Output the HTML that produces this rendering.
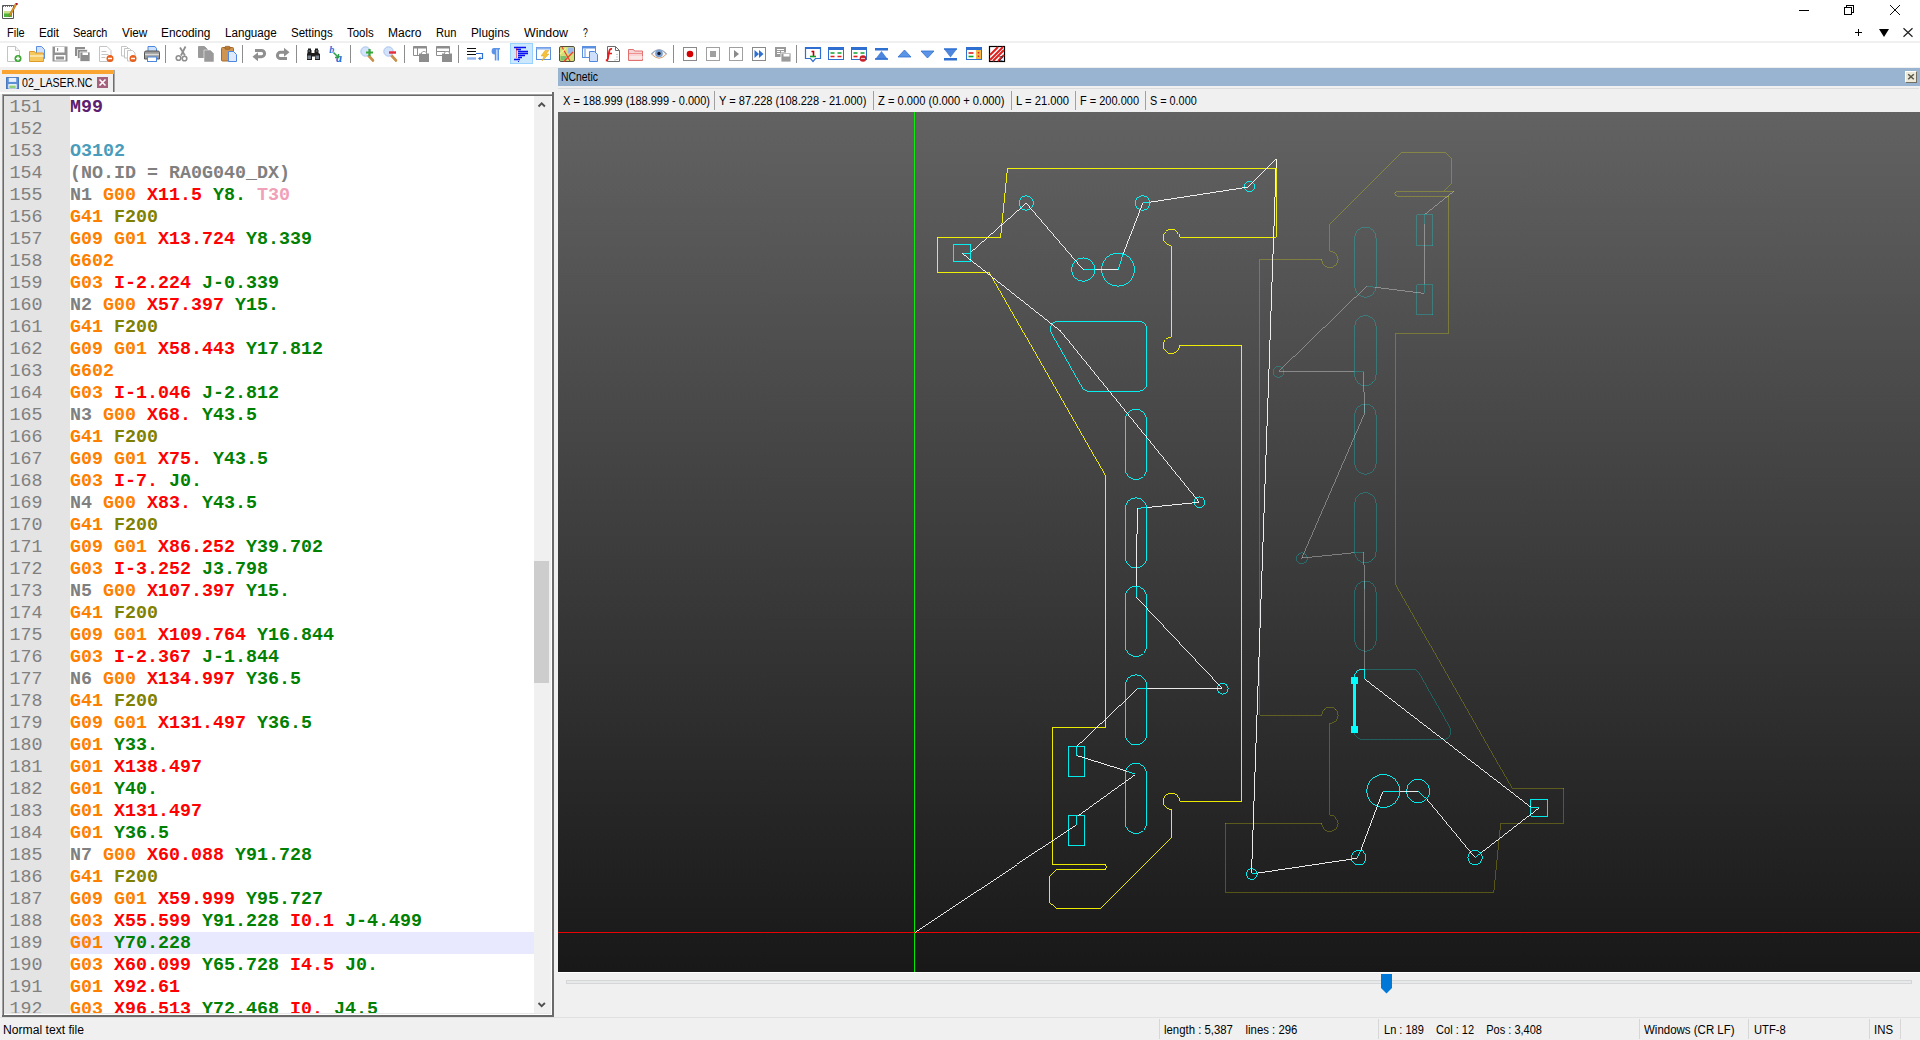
<!DOCTYPE html>
<html><head><meta charset="utf-8"><title>02_LASER.NC - Notepad++</title>
<style>
html,body{margin:0;padding:0;background:#fff;overflow:hidden}
body{width:1920px;height:1040px;position:relative;font-family:"Liberation Sans", sans-serif;font-size:12px;color:#000}
.abs{position:absolute}
.ui{position:absolute;white-space:nowrap;font-size:12px;line-height:16px;height:16px;transform-origin:0 50%;color:#000}
#titlebar{position:absolute;left:0;top:0;width:1920px;height:22px;background:#fff}
#menubar{position:absolute;left:0;top:22px;width:1920px;height:20px;background:#fff}
#tbline{position:absolute;left:0;top:41px;width:1920px;height:2px;background:#f0f0f0}
#toolbar{position:absolute;left:0;top:43px;width:1920px;height:24px;background:#fff}
.tsep{position:absolute;top:45px;width:1px;height:18px;background:#8d8d8d}
.tsel{position:absolute;background:#cce8ff;border:1px solid #99d1ff}
.ic{position:absolute;overflow:visible}
#lower{position:absolute;left:0;top:67px;width:1920px;height:973px;background:#f0f0f0}
#tab{position:absolute;left:2px;top:70px;width:111px;height:24px;background:#f0f0f0;border-right:1px solid #6d6d6d;box-shadow:1px 0 0 #a8a8a8}
#tabbar{position:absolute;left:2px;top:69.5px;width:112px;height:4px;background:#faa432}
#edframe{position:absolute;left:2px;top:94px;width:552px;height:923px;background:#6a6a6a}
#edtopw{position:absolute;left:0px;top:92px;width:552.4px;height:2px;background:#fff}
#edrt{position:absolute;left:552.4px;top:92px;width:1.6px;height:4px;background:#6a6a6a}
#edtl{position:absolute;left:2px;top:94px;width:550.4px;height:921.2px;background:#a0a0a0}
#edtl2{position:absolute;left:3px;top:95px;width:549.4px;height:920.2px;background:#6a6a6a}
#edin{position:absolute;left:4px;top:96px;width:548.4px;height:919.2px;background:#fff}
#edline{position:absolute;left:4px;top:1013px;width:546.5px;height:1px;background:#e8e8e8}
#editor{position:absolute;left:4px;top:96px;width:530px;height:917px;background:#fff;overflow:hidden}
#margin{position:absolute;left:0;top:0;width:66px;height:920px;background:#e4e4e4}
.row{position:absolute;left:0;width:530px;height:22px;line-height:24px;white-space:pre;font-family:"Liberation Mono",monospace;font-size:18.33px;font-weight:bold}
.row.cur .tx{background:#e8e8ff}
.ln{position:absolute;left:5.5px;top:0;color:#808080;font-weight:normal}
.tx{position:absolute;left:66px;top:0;width:464px;height:22px}
.k-m{color:#5c2070} .k-o{color:#4a9cba} .k-cm{color:#808080} .k-n{color:#808080} .k-g{color:#ff8000}
.k-x{color:#ff0000} .k-y{color:#008000} .k-t{color:#f0a0b8} .k-f{color:#808000}
#vscroll{position:absolute;left:534px;top:96px;width:16.5px;height:917px;background:#f0f0f0}
#vthumb{position:absolute;left:534px;top:561px;width:15px;height:122px;background:#cdcdcd}
#pane-title{position:absolute;left:558px;top:68px;width:1362px;height:18px;background:#99b4d1}
#pane-line{position:absolute;left:558px;top:88px;width:1361px;height:1px;background:#dcdcdc}
#pane-close{position:absolute;left:1905px;top:71px;width:10px;height:10px;background:#ece9d8;border-top:1px solid #fff;border-left:1px solid #fff;border-right:1px solid #716f64;border-bottom:1px solid #716f64}
.isep{position:absolute;top:91px;width:1px;height:19px;background:#a0a0a0}
#plot{position:absolute;left:558px;top:112px;width:1362px;height:860px;background:linear-gradient(#626262,#181818);overflow:hidden}
#plot svg{position:absolute;left:0;top:0}
#plot path{fill:none;stroke-width:.9;shape-rendering:crispEdges}
.y{stroke:#ffff00} .c{stroke:#00ffff} .w{stroke:#ffffff}
.dim{stroke-opacity:.27} .w.dim{stroke-opacity:.38}
.cur{stroke:#00ffff;stroke-width:3.5 !important}
#strack{position:absolute;left:566px;top:980px;width:1344px;height:2px;background:#e7eaea;border:1px solid #d6d6d6;box-sizing:content-box}
#sthumb{position:absolute;left:1381px;top:974px}
#plotw{position:absolute;left:558px;top:972px;width:1362px;height:1px;background:#fff}
#statusline{position:absolute;left:0;top:1017px;width:1920px;height:1px;background:#e0e0e0}
.ssep{position:absolute;top:1019px;width:1px;height:20px;background:#d7d7d7}
</style></head>
<body>
<div id="titlebar">
<svg class="abs" style="left:2px;top:3px" width="17" height="18" viewBox="0 0 17 18"><path d="M.5 2.500h11v13h-11z" fill="#fff" stroke="#555"/><path d="M1 3.500h10" stroke="#777" stroke-dasharray="1 1"/><rect x="2" y="8" width="8" height="6" fill="#4fb43a"/><rect x="2" y="8" width="8" height="2.500" fill="#c8e08c"/><path d="M15 1l-6.500 11.500l-1.500 1.500l.3-2.300L13.500.3z" fill="#f0a020" stroke="#a05a10" stroke-width=".6"/><circle cx="14.800" cy=".9" r="1" fill="#b01020"/></svg>
<svg class="abs" style="left:1790px;top:0" width="130" height="22" viewBox="0 0 130 22" shape-rendering="crispEdges">
<path d="M9 10.5h10" stroke="#000" stroke-width="1" fill="none"/>
<path d="M54.5 7.5h7v7h-7z M56.5 7.500v-2h7v7h-2" stroke="#000" stroke-width="1" fill="none"/>
<path d="M100 5l10 10M110 5l-10 10" stroke="#000" stroke-width=".95" fill="none" shape-rendering="geometricPrecision"/>
</svg>
</div>
<div id="menubar"></div>
<span id="t1" class="ui" style="left:7.3px;top:25px;transform:scaleX(0.9150);">File</span>
<span id="t2" class="ui" style="left:39px;top:25px;transform:scaleX(0.9668);">Edit</span>
<span id="t3" class="ui" style="left:73.3px;top:25px;transform:scaleX(0.9045);">Search</span>
<span id="t4" class="ui" style="left:121.7px;top:25px;transform:scaleX(0.9807);">View</span>
<span id="t5" class="ui" style="left:161.3px;top:25px;transform:scaleX(0.9871);">Encoding</span>
<span id="t6" class="ui" style="left:225.3px;top:25px;transform:scaleX(0.9683);">Language</span>
<span id="t7" class="ui" style="left:291px;top:25px;transform:scaleX(0.9617);">Settings</span>
<span id="t8" class="ui" style="left:347px;top:25px;transform:scaleX(0.9530);">Tools</span>
<span id="t9" class="ui" style="left:388.3px;top:25px;transform:scaleX(1.0017);">Macro</span>
<span id="t10" class="ui" style="left:436.3px;top:25px;transform:scaleX(0.9266);">Run</span>
<span id="t11" class="ui" style="left:471.3px;top:25px;transform:scaleX(0.9832);">Plugins</span>
<span id="t12" class="ui" style="left:524px;top:25px;transform:scaleX(1.0307);">Window</span>
<span id="t13" class="ui" style="left:582.7px;top:25px;transform:scaleX(0.7178);">?</span>
<svg class="abs" style="left:1850px;top:24px" width="70" height="16" viewBox="0 0 70 16">
<path d="M4.500 8.500h7M8 5v7" stroke="#000" stroke-width="1" fill="none" shape-rendering="crispEdges"/>
<path d="M29 5h10l-5 8z" fill="#000"/>
<path d="M53.500 4.200l9 8.600M62.500 4.200l-9 8.600" stroke="#222" stroke-width="1.200" fill="none"/>
</svg>
<div id="tbline"></div>
<div id="toolbar"></div>
<div class="tsep" style="left:165px"></div>
<div class="tsep" style="left:242px"></div>
<div class="tsep" style="left:296px"></div>
<div class="tsep" style="left:350px"></div>
<div class="tsep" style="left:404px"></div>
<div class="tsep" style="left:458px"></div>
<div class="tsep" style="left:673px"></div>
<div class="tsep" style="left:796px"></div>
<div class="tsel" style="left:510px;top:43px;width:21px;height:19px"></div>
<svg class="ic" style="left:6px;top:46px" width="16" height="16" viewBox="0 0 16 16"><path d="M1.500 .5h8l4 4v11h-12z" fill="#fff" stroke="#c4c4c4"/><path d="M9.500 .5v4h4" fill="#f4f4f4" stroke="#c4c4c4"/><circle cx="12" cy="12.500" r="3.500" fill="#3fa535"/><path d="M10 12.500h4M12 10.500v4" stroke="#fff" stroke-width="1.400"/></svg>
<svg class="ic" style="left:29px;top:46px" width="16" height="16" viewBox="0 0 16 16"><path d="M7.500 .5h5l3 3v9h-8z" fill="#cfe0fb" stroke="#5b8de0"/><path d="M.5 5.500h5l1 1.500h8v8.500h-14z" fill="#f6c860" stroke="#e09a28"/><path d="M1 10h13.500" stroke="#fbe3a6" stroke-width="2"/></svg>
<svg class="ic" style="left:52px;top:46px" width="16" height="16" viewBox="0 0 16 16"><path d="M.5 .5h15v15h-15z" fill="#929292"/><rect x="3" y="1" width="9.500" height="5.500" fill="#fff"/><rect x="5" y="2" width="1.200" height="3" fill="#929292"/><rect x="2.500" y="9" width="11" height="5.500" fill="#fff"/><rect x="4" y="10.500" width="8" height="3" fill="#929292"/></svg>
<svg class="ic" style="left:75px;top:46px" width="16" height="16" viewBox="0 0 16 16"><path d="M0 1h10v9h-10z" fill="#8d8d8d"/><path d="M2.500 3.500h10v9h-10z" fill="#8d8d8d" stroke="#fff" stroke-width=".7"/><path d="M5 6h10v9.500h-10z" fill="#8d8d8d" stroke="#fff" stroke-width=".7"/><rect x="7.500" y="6.500" width="5.500" height="2.500" fill="#fff"/></svg>
<svg class="ic" style="left:98px;top:46px" width="16" height="16" viewBox="0 0 16 16"><path d="M1.500 .5h7.500l4 4v11h-11.500z" fill="#fff" stroke="#c4c4c4"/><path d="M3.500 5.500h5M3.500 8.500h7M3.500 11.500h4" stroke="#c4c4c4" stroke-width="1"/><circle cx="12" cy="12.500" r="3.500" fill="#e8601c"/><path d="M10 12.500h4" stroke="#fff" stroke-width="1.500"/></svg>
<svg class="ic" style="left:121px;top:46px" width="16" height="16" viewBox="0 0 16 16"><path d="M.5 .5h5l2.500 2.500v7h-7.500z" fill="#fff" stroke="#c4c4c4"/><path d="M3.500 2.500h5l2.500 2.500v7h-7.500z" fill="#fff" stroke="#c4c4c4"/><path d="M6.500 4.500h5l2.500 2.500v8h-7.500z" fill="#fff" stroke="#c4c4c4"/><circle cx="12" cy="12.500" r="3.500" fill="#e8601c"/><path d="M10 12.500h4" stroke="#fff" stroke-width="1.500"/></svg>
<svg class="ic" style="left:144px;top:46px" width="16" height="16" viewBox="0 0 16 16"><path d="M4 .5h7l1.500 2v4h-8.500z" fill="#cfe0fb" stroke="#4e86e0"/><path d="M.5 6.500q0-1.500 1.500-1.500h12q1.500 0 1.500 1.500v6.500h-15z" fill="#9a9a9a" stroke="#555"/><path d="M1 8.500h14" stroke="#d8d8d8" stroke-width="1.500"/><rect x="3.500" y="11" width="9" height="4.500" fill="#fff" stroke="#4e86e0"/></svg>
<svg class="ic" style="left:175px;top:46px" width="16" height="16" viewBox="0 0 16 16"><path d="M10.500 .5L6 9.500M5 1.500l5 8" stroke="#8f8f8f" stroke-width="1.800" fill="none"/><circle cx="3.500" cy="12" r="2.300" fill="none" stroke="#8f8f8f" stroke-width="1.600"/><circle cx="9.500" cy="12.500" r="2.300" fill="none" stroke="#8f8f8f" stroke-width="1.600"/></svg>
<svg class="ic" style="left:198px;top:46px" width="16" height="16" viewBox="0 0 16 16"><path d="M.5 .5h6l3 3v8h-9z" fill="#9a9a9a" stroke="#fff" stroke-width=".6"/><path d="M.5 .5h6l3 3v8h-9z" fill="none" stroke="#9a9a9a"/><path d="M6.500 4.500h6l3 3v8h-9z" fill="#9a9a9a" stroke="#fff" stroke-width="1.600"/><path d="M6.500 4.500h6l3 3v8h-9z" fill="#9a9a9a" stroke="#9a9a9a" stroke-width=".5"/></svg>
<svg class="ic" style="left:221px;top:46px" width="16" height="16" viewBox="0 0 16 16"><rect x=".5" y="1.500" width="12" height="13.500" rx="1" fill="#cf9550" stroke="#a86a28"/><rect x="4" y=".3" width="5" height="3" rx=".8" fill="#b97a34" stroke="#8a5520" stroke-width=".6"/><path d="M7.500 5.500h5l3 3v7h-8z" fill="#dfeafc" stroke="#4e86e0"/></svg>
<svg class="ic" style="left:252px;top:46px" width="16" height="16" viewBox="0 0 16 16"><path d="M3 4.500h6.500a3.100 3.100 0 0 1 0 6.200h-4" stroke="#8f8f8f" stroke-width="3" fill="none"/><path d="M6 6.200v9l-5.500-4.500z" fill="#8f8f8f"/></svg>
<svg class="ic" style="left:275px;top:46px" width="16" height="16" viewBox="0 0 16 16"><g transform="rotate(180 7.500 8.500)"><path d="M3 4.500h6.500a3.100 3.100 0 0 1 0 6.200h-4" stroke="#8f8f8f" stroke-width="3" fill="none"/><path d="M6 6.200v9l-5.500-4.500z" fill="#8f8f8f"/></g></svg>
<svg class="ic" style="left:306px;top:46px" width="16" height="16" viewBox="0 0 16 16"><path d="M1.500 4h4v3h3v-3h4v3l1.500 1v6h-5v-3.500h-3v3.500h-5v-6l.5-1z" fill="#1d1d1d"/><path d="M2 2.500h3v2h-3zM9 2.500h3v2h-3z" fill="#1d1d1d"/><path d="M1.500 9.500h3.500v3.500h-3.500zM9.500 9.500h3.500v3.500h-3.500z" fill="#77828e"/><path d="M2.500 5h1.500M10 5h1.500" stroke="#8c98a6"/></svg>
<svg class="ic" style="left:329px;top:46px" width="16" height="16" viewBox="0 0 16 16"><text x=".2" y="7" font-family="Liberation Serif,serif" font-style="italic" font-weight="bold" font-size="10" fill="#2a6fd6">b</text><text x="7" y="15.500" font-family="Liberation Serif,serif" font-style="italic" font-weight="bold" font-size="12" fill="#2a6fd6">a</text><path d="M4.500 6.500l4.500 4.500M9.500 8v3.500h-3.500" stroke="#2e9e4a" stroke-width="1.500" fill="none"/></svg>
<svg class="ic" style="left:360px;top:46px" width="16" height="16" viewBox="0 0 16 16"><path d="M7.500 8.500l5.500 6" stroke="#c8904a" stroke-width="2.600" stroke-linecap="round"/><circle cx="5.500" cy="5.500" r="4.700" fill="#d2e3fb" stroke="#a9c4ee"/><path d="M6 6.500h7M9.500 3v7" stroke="#3aa53a" stroke-width="2.200"/></svg>
<svg class="ic" style="left:383px;top:46px" width="16" height="16" viewBox="0 0 16 16"><path d="M7.500 8.500l5.500 6" stroke="#c8904a" stroke-width="2.600" stroke-linecap="round"/><circle cx="5.500" cy="5.500" r="4.700" fill="#d2e3fb" stroke="#a9c4ee"/><path d="M6 6.500h7" stroke="#e82a3a" stroke-width="2.400"/></svg>
<svg class="ic" style="left:413px;top:46px" width="16" height="16" viewBox="0 0 16 16"><path d="M.5 .5h13v9h-13z" fill="#fff" stroke="#8d8d8d"/><path d="M.5 .5h13v2h-13z" fill="#8d8d8d"/><path d="M4.500 2v7.500" stroke="#8d8d8d"/><rect x="6" y="7.500" width="10" height="8.500" fill="#8d8d8d"/><path d="M8.500 8v-1.500q2.500-2.500 5 0v1.500" fill="#fff" stroke="#8d8d8d" stroke-width=".8"/></svg>
<svg class="ic" style="left:436px;top:46px" width="16" height="16" viewBox="0 0 16 16"><path d="M.5 .5h13v9h-13z" fill="#fff" stroke="#8d8d8d"/><path d="M.5 .5h13v2h-13z" fill="#8d8d8d"/><path d="M.5 5.500h13" stroke="#8d8d8d"/><rect x="6" y="7.500" width="10" height="8.500" fill="#8d8d8d"/><path d="M8.500 8v-1.500q2.500-2.500 5 0v1.500" fill="#fff" stroke="#8d8d8d" stroke-width=".8"/></svg>
<svg class="ic" style="left:467px;top:46px" width="16" height="16" viewBox="0 0 16 16"><path d="M0 2.500h9M0 5.500h9M0 8.500h9" stroke="#111" stroke-width="1"/><path d="M0 12.500h9" stroke="#8fb4ee" stroke-width="2.400"/><path d="M9 7.500h6.500v5h-3" stroke="#2e6fd0" stroke-width="1.200" fill="none"/><path d="M13.500 10.500l-2.500 2l2.500 2z" fill="#2e6fd0"/></svg>
<svg class="ic" style="left:490px;top:46px" width="16" height="16" viewBox="0 0 16 16"><path d="M4 2h6v1.500h-1v11h-1.600v-11h-1v11h-1.600v-6q-3.200 0-3.200-3.200t2.400-3.300z" fill="#5b94e6"/></svg>
<svg class="ic" style="left:513px;top:46px" width="16" height="16" viewBox="0 0 16 16"><path d="M0 1.500h12M2 3.500h5M4 5.500h10M4 7.500h10M4 9.500h7M4 11.500h4M0 13.500h6" stroke="#0a10ee" stroke-width="1.500" transform="translate(1 0)"/><path d="M3.500 2.500v10" stroke="#ee1111" stroke-width="1" stroke-dasharray="1 1"/><rect x="5" y="15" width="1" height="1" fill="#0a10ee"/></svg>
<svg class="ic" style="left:536px;top:46px" width="16" height="16" viewBox="0 0 16 16"><rect x=".5" y="1.500" width="14" height="12" fill="#fff" stroke="#5b8fe0"/><rect x=".5" y="1.500" width="14" height="2" fill="#8fb4ee"/><path d="M9 4.500h4l-3 3.500h3l-7 7l2-5h-3z" fill="#f3c23a" stroke="#e0a020" stroke-width=".5"/></svg>
<svg class="ic" style="left:559px;top:46px" width="16" height="16" viewBox="0 0 16 16"><rect x=".5" y=".5" width="15" height="15" rx="1.500" fill="#d3e07a" stroke="#55503a"/><rect x="9" y="1.500" width="5.500" height="6" fill="#9db8e6"/><rect x="1.500" y="10" width="6" height="4.500" fill="#7fc070"/><path d="M3 1l8 14M14 6l-9 9.500" stroke="#ee4030" stroke-width="1.200"/><path d="M1 8l6-6" stroke="#f6f08a" stroke-width="1.200"/></svg>
<svg class="ic" style="left:582px;top:46px" width="16" height="16" viewBox="0 0 16 16"><rect x=".5" y=".5" width="13" height="11" fill="#fff" stroke="#5b8fe0"/><rect x=".5" y=".5" width="13" height="2" fill="#5b8fe0"/><path d="M3 3v8" stroke="#5b8fe0"/><path d="M7.500 5.500h5l3 3v7h-8z" fill="#cddffa" stroke="#4e86e0"/></svg>
<svg class="ic" style="left:605px;top:46px" width="16" height="16" viewBox="0 0 16 16"><path d="M2.500 .5h8l4 4v11h-12z" fill="#fff" stroke="#6d6d6d"/><path d="M10.500 .5v4h4" fill="none" stroke="#6d6d6d"/><path d="M12 8v6h-4" stroke="#9a9a9a" stroke-dasharray="1 1.500" fill="none"/><path d="M7 3q-2.200-.5-2.700 2l-1.500 8q-.3 1.500-2 1.500" stroke="#e02020" stroke-width="1.800" fill="none"/><path d="M2 7.500h5" stroke="#e02020" stroke-width="1.500"/></svg>
<svg class="ic" style="left:628px;top:46px" width="16" height="16" viewBox="0 0 16 16"><path d="M.5 3.500h5l1 1.500h8v9.500h-14z" fill="#f9d4d4" stroke="#e07070"/><path d="M1 7.500h13.500" stroke="#ee9090" stroke-width="1"/><path d="M1 11.500h13.500" stroke="#fbe6e6" stroke-width="3"/></svg>
<svg class="ic" style="left:651px;top:46px" width="16" height="16" viewBox="0 0 16 16"><path d="M.5 8q7.500-8.500 15 0q-7.500 8.500-15 0z" fill="#f4f4f4" stroke="#d9a070" stroke-width="1"/><path d="M.5 8q7.500-8.500 15 0" fill="none" stroke="#9ab0d0" stroke-width="1.200"/><circle cx="8" cy="7.500" r="3.800" fill="#7a9fd0"/><circle cx="8" cy="7.500" r="1.700" fill="#1a1a2a"/></svg>
<svg class="ic" style="left:683px;top:46px" width="16" height="16" viewBox="0 0 16 16"><rect x=".5" y="1.500" width="13" height="13" fill="#fff" stroke="#8a8a8a"/><circle cx="7" cy="8" r="3.300" fill="#d40000"/></svg>
<svg class="ic" style="left:706px;top:46px" width="16" height="16" viewBox="0 0 16 16"><rect x=".5" y="1.500" width="13" height="13" fill="#fff" stroke="#a0a0a0"/><rect x="4" y="5" width="6" height="6" fill="#a0a0a0"/></svg>
<svg class="ic" style="left:729px;top:46px" width="16" height="16" viewBox="0 0 16 16"><rect x=".5" y="1.500" width="13" height="13" fill="#fff" stroke="#a0a0a0"/><path d="M5 4l5 4l-5 4z" fill="#8a8a8a"/></svg>
<svg class="ic" style="left:752px;top:46px" width="16" height="16" viewBox="0 0 16 16"><rect x=".5" y="1.500" width="13" height="13" fill="#fff" stroke="#8a8a8a"/><path d="M2.500 4l4.500 4l-4.500 4zM7 4l4.500 4l-4.500 4z" fill="#2e6fd0"/></svg>
<svg class="ic" style="left:775px;top:46px" width="16" height="16" viewBox="0 0 16 16"><path d="M0 1h11v10h-11z" fill="#9a9a9a"/><path d="M2 3.500h7M2 5.500h3M6 5.500h3M2 7.500h3" stroke="#fff" stroke-width="1"/><path d="M6 7h10v9h-10z" fill="#9a9a9a" stroke="#fff" stroke-width=".8"/><rect x="8.500" y="8" width="6" height="2.500" fill="#fff"/></svg>
<svg class="ic" style="left:805px;top:46px" width="16" height="16" viewBox="0 0 16 16"><path d="M.5 1.500h15v11h-5l-2.500 3l-2.500-3h-5z" fill="#fff" stroke="#2e6fd0" stroke-width="1.200"/><path d="M.5 1.500h15v1.500h-15z" fill="#2e6fd0"/><path d="M6.500 5.500h2v4.500" stroke="#c00000" stroke-width="1.600" fill="none"/><path d="M5 10.500h6" stroke="#10a030" stroke-width="1.600"/></svg>
<svg class="ic" style="left:828px;top:46px" width="16" height="16" viewBox="0 0 16 16"><rect x=".5" y="1.500" width="15" height="12" fill="#fff" stroke="#2e6fd0" stroke-width="1"/><rect x=".5" y="1.500" width="15" height="2.500" fill="#2e6fd0"/><path d="M2.500 7h4M9.500 7h4" stroke="#10a030" stroke-width="1.600"/><path d="M2.500 10.500h4M9.500 10.500h4" stroke="#e02020" stroke-width="1.600"/></svg>
<svg class="ic" style="left:851px;top:46px" width="16" height="16" viewBox="0 0 16 16"><rect x=".5" y="1.500" width="15" height="12" fill="#fff" stroke="#2e6fd0" stroke-width="1"/><rect x=".5" y="1.500" width="15" height="2.500" fill="#2e6fd0"/><path d="M2.500 7h4M9.500 7h4" stroke="#10a030" stroke-width="1.600"/><path d="M2.500 10.500h4" stroke="#e02020" stroke-width="1.600"/><circle cx="12" cy="12.500" r="3.300" fill="#c81e28"/><path d="M10 12.500h4" stroke="#f6c0c0" stroke-width="1.200"/></svg>
<svg class="ic" style="left:874px;top:46px" width="16" height="16" viewBox="0 0 16 16"><path d="M1 2h13v2.500h-13z" fill="#2e6fd0"/><path d="M7.500 5l6.500 8.500h-13z" fill="#4d86dc"/><path d="M1 13h13" stroke="#2e6fd0" stroke-width="1.500"/></svg>
<svg class="ic" style="left:897px;top:46px" width="16" height="16" viewBox="0 0 16 16"><path d="M7.500 4l6.500 7h-13z" fill="#5b94e6" stroke="#2e6fd0" stroke-width=".8"/></svg>
<svg class="ic" style="left:920px;top:46px" width="16" height="16" viewBox="0 0 16 16"><path d="M7.500 12l6.500-7h-13z" fill="#5b94e6" stroke="#2e6fd0" stroke-width=".8"/></svg>
<svg class="ic" style="left:943px;top:46px" width="16" height="16" viewBox="0 0 16 16"><path d="M1 12h13v2.500h-13z" fill="#2e6fd0"/><path d="M7.500 11.500l6.500-8.500h-13z" fill="#4d86dc"/><path d="M1 3h13" stroke="#2e6fd0" stroke-width="1.500"/></svg>
<svg class="ic" style="left:966px;top:46px" width="16" height="16" viewBox="0 0 16 16"><rect x=".5" y="1.500" width="15" height="12" fill="#fff" stroke="#2e6fd0" stroke-width="1"/><rect x=".5" y="1.500" width="15" height="2.500" fill="#2e6fd0"/><path d="M2.500 7h5" stroke="#e02020" stroke-width="1.600"/><path d="M2.500 10.500h5" stroke="#10a030" stroke-width="1.600"/><rect x="10" y="4" width="5" height="9" fill="#f3b84a"/><path d="M12.500 6v1.500M12.500 9.500v1.500" stroke="#e02020" stroke-width="1.500"/></svg>
<svg class="ic" style="left:989px;top:46px" width="16" height="16" viewBox="0 0 16 16"><rect x=".5" y=".5" width="15" height="15" fill="#fff" stroke="#000" stroke-width="1.200"/><path d="M1 9l8-8M1 14l13-13M4 15l11-11M9 15l6-6" stroke="#e02020" stroke-width="2"/><text x="9.500" y="15" font-family="Liberation Sans,sans-serif" font-size="8" fill="#222">2</text></svg>
<div id="lower"></div>
<div id="tab"></div>
<div id="tabbar"></div>
<svg class="abs" style="left:6px;top:76.5px" width="13" height="12.5" viewBox="0 0 14 14" preserveAspectRatio="none"><path d="M.5 .5h13v13h-13z" fill="#5b8fd6" stroke="#3d6fb8"/><rect x="3" y="1" width="8" height="4.500" fill="#e8f0fb"/><rect x="2.500" y="8" width="9" height="5" fill="#fff"/><rect x="3.500" y="9.500" width="7" height="3" fill="#8fcf7a"/></svg>
<span id="t26" class="ui" style="left:22px;top:74.5px;transform:scaleX(0.8807);">02_LASER.NC</span>
<svg class="abs" style="left:97px;top:77px" width="11" height="11" viewBox="0 0 11 11"><rect width="11" height="11" fill="#a4607c"/><path d="M2.500 2.500l6 6M8.500 2.500l-6 6" stroke="#fff" stroke-width="1.6"/></svg>
<div id="edframe"></div><div id="edtopw"></div><div id="edrt"></div><div id="edtl"></div><div id="edtl2"></div><div id="edin"></div><div id="edline"></div>
<div id="editor"><div id="margin"></div>
<div class="row" style="top:0px"><span class="ln">151</span><span class="tx"><span class="k-m">M99</span></span></div>
<div class="row" style="top:22px"><span class="ln">152</span><span class="tx"></span></div>
<div class="row" style="top:44px"><span class="ln">153</span><span class="tx"><span class="k-o">O3102</span></span></div>
<div class="row" style="top:66px"><span class="ln">154</span><span class="tx"><span class="k-cm">(NO.ID = RA0G040_DX)</span></span></div>
<div class="row" style="top:88px"><span class="ln">155</span><span class="tx"><span class="k-n">N1</span> <span class="k-g">G00</span> <span class="k-x">X11.5</span> <span class="k-y">Y8.</span> <span class="k-t">T30</span></span></div>
<div class="row" style="top:110px"><span class="ln">156</span><span class="tx"><span class="k-g">G41</span> <span class="k-f">F200</span></span></div>
<div class="row" style="top:132px"><span class="ln">157</span><span class="tx"><span class="k-g">G09</span> <span class="k-g">G01</span> <span class="k-x">X13.724</span> <span class="k-y">Y8.339</span></span></div>
<div class="row" style="top:154px"><span class="ln">158</span><span class="tx"><span class="k-g">G602</span></span></div>
<div class="row" style="top:176px"><span class="ln">159</span><span class="tx"><span class="k-g">G03</span> <span class="k-x">I-2.224</span> <span class="k-y">J-0.339</span></span></div>
<div class="row" style="top:198px"><span class="ln">160</span><span class="tx"><span class="k-n">N2</span> <span class="k-g">G00</span> <span class="k-x">X57.397</span> <span class="k-y">Y15.</span></span></div>
<div class="row" style="top:220px"><span class="ln">161</span><span class="tx"><span class="k-g">G41</span> <span class="k-f">F200</span></span></div>
<div class="row" style="top:242px"><span class="ln">162</span><span class="tx"><span class="k-g">G09</span> <span class="k-g">G01</span> <span class="k-x">X58.443</span> <span class="k-y">Y17.812</span></span></div>
<div class="row" style="top:264px"><span class="ln">163</span><span class="tx"><span class="k-g">G602</span></span></div>
<div class="row" style="top:286px"><span class="ln">164</span><span class="tx"><span class="k-g">G03</span> <span class="k-x">I-1.046</span> <span class="k-y">J-2.812</span></span></div>
<div class="row" style="top:308px"><span class="ln">165</span><span class="tx"><span class="k-n">N3</span> <span class="k-g">G00</span> <span class="k-x">X68.</span> <span class="k-y">Y43.5</span></span></div>
<div class="row" style="top:330px"><span class="ln">166</span><span class="tx"><span class="k-g">G41</span> <span class="k-f">F200</span></span></div>
<div class="row" style="top:352px"><span class="ln">167</span><span class="tx"><span class="k-g">G09</span> <span class="k-g">G01</span> <span class="k-x">X75.</span> <span class="k-y">Y43.5</span></span></div>
<div class="row" style="top:374px"><span class="ln">168</span><span class="tx"><span class="k-g">G03</span> <span class="k-x">I-7.</span> <span class="k-y">J0.</span></span></div>
<div class="row" style="top:396px"><span class="ln">169</span><span class="tx"><span class="k-n">N4</span> <span class="k-g">G00</span> <span class="k-x">X83.</span> <span class="k-y">Y43.5</span></span></div>
<div class="row" style="top:418px"><span class="ln">170</span><span class="tx"><span class="k-g">G41</span> <span class="k-f">F200</span></span></div>
<div class="row" style="top:440px"><span class="ln">171</span><span class="tx"><span class="k-g">G09</span> <span class="k-g">G01</span> <span class="k-x">X86.252</span> <span class="k-y">Y39.702</span></span></div>
<div class="row" style="top:462px"><span class="ln">172</span><span class="tx"><span class="k-g">G03</span> <span class="k-x">I-3.252</span> <span class="k-y">J3.798</span></span></div>
<div class="row" style="top:484px"><span class="ln">173</span><span class="tx"><span class="k-n">N5</span> <span class="k-g">G00</span> <span class="k-x">X107.397</span> <span class="k-y">Y15.</span></span></div>
<div class="row" style="top:506px"><span class="ln">174</span><span class="tx"><span class="k-g">G41</span> <span class="k-f">F200</span></span></div>
<div class="row" style="top:528px"><span class="ln">175</span><span class="tx"><span class="k-g">G09</span> <span class="k-g">G01</span> <span class="k-x">X109.764</span> <span class="k-y">Y16.844</span></span></div>
<div class="row" style="top:550px"><span class="ln">176</span><span class="tx"><span class="k-g">G03</span> <span class="k-x">I-2.367</span> <span class="k-y">J-1.844</span></span></div>
<div class="row" style="top:572px"><span class="ln">177</span><span class="tx"><span class="k-n">N6</span> <span class="k-g">G00</span> <span class="k-x">X134.997</span> <span class="k-y">Y36.5</span></span></div>
<div class="row" style="top:594px"><span class="ln">178</span><span class="tx"><span class="k-g">G41</span> <span class="k-f">F200</span></span></div>
<div class="row" style="top:616px"><span class="ln">179</span><span class="tx"><span class="k-g">G09</span> <span class="k-g">G01</span> <span class="k-x">X131.497</span> <span class="k-y">Y36.5</span></span></div>
<div class="row" style="top:638px"><span class="ln">180</span><span class="tx"><span class="k-g">G01</span> <span class="k-y">Y33.</span></span></div>
<div class="row" style="top:660px"><span class="ln">181</span><span class="tx"><span class="k-g">G01</span> <span class="k-x">X138.497</span></span></div>
<div class="row" style="top:682px"><span class="ln">182</span><span class="tx"><span class="k-g">G01</span> <span class="k-y">Y40.</span></span></div>
<div class="row" style="top:704px"><span class="ln">183</span><span class="tx"><span class="k-g">G01</span> <span class="k-x">X131.497</span></span></div>
<div class="row" style="top:726px"><span class="ln">184</span><span class="tx"><span class="k-g">G01</span> <span class="k-y">Y36.5</span></span></div>
<div class="row" style="top:748px"><span class="ln">185</span><span class="tx"><span class="k-n">N7</span> <span class="k-g">G00</span> <span class="k-x">X60.088</span> <span class="k-y">Y91.728</span></span></div>
<div class="row" style="top:770px"><span class="ln">186</span><span class="tx"><span class="k-g">G41</span> <span class="k-f">F200</span></span></div>
<div class="row" style="top:792px"><span class="ln">187</span><span class="tx"><span class="k-g">G09</span> <span class="k-g">G01</span> <span class="k-x">X59.999</span> <span class="k-y">Y95.727</span></span></div>
<div class="row" style="top:814px"><span class="ln">188</span><span class="tx"><span class="k-g">G03</span> <span class="k-x">X55.599</span> <span class="k-y">Y91.228</span> <span class="k-x">I0.1</span> <span class="k-y">J-4.499</span></span></div>
<div class="row cur" style="top:836px"><span class="ln">189</span><span class="tx"><span class="k-g">G01</span> <span class="k-y">Y70.228</span></span></div>
<div class="row" style="top:858px"><span class="ln">190</span><span class="tx"><span class="k-g">G03</span> <span class="k-x">X60.099</span> <span class="k-y">Y65.728</span> <span class="k-x">I4.5</span> <span class="k-y">J0.</span></span></div>
<div class="row" style="top:880px"><span class="ln">191</span><span class="tx"><span class="k-g">G01</span> <span class="k-x">X92.61</span></span></div>
<div class="row" style="top:902px"><span class="ln">192</span><span class="tx"><span class="k-g">G03</span> <span class="k-x">X96.513</span> <span class="k-y">Y72.468</span> <span class="k-x">I0.</span> <span class="k-y">J4.5</span></span></div>
</div>
<div id="vscroll"></div><div id="vthumb"></div>
<svg class="abs" style="left:534px;top:96px" width="17" height="920" viewBox="0 0 17 920"><path d="M4.500 10.500l3.200-3.200l3.200 3.200M4.500 907l3.200 3.200l3.200-3.200" stroke="#505050" stroke-width="1.9" fill="none"/></svg>
<div id="pane-title"></div><span id="t27" class="ui" style="left:560.5px;top:69px;transform:scaleX(0.8668);">NCnetic</span>
<div id="pane-close"></div>
<svg class="abs" style="left:1905px;top:71px" width="12" height="12" viewBox="0 0 12 12"><path d="M3.200 3.300l5.600 4.900M8.800 3.300l-5.600 4.900" stroke="#55534a" stroke-width="1.500"/></svg>
<div id="pane-line"></div>
<span id="t14" class="ui" style="left:563px;top:92.5px;transform:scaleX(0.9162);">X = 188.999 (188.999 - 0.000)</span>
<span id="t15" class="ui" style="left:719.3px;top:92.5px;transform:scaleX(0.9198);">Y = 87.228 (108.228 - 21.000)</span>
<span id="t16" class="ui" style="left:878px;top:92.5px;transform:scaleX(0.9294);">Z = 0.000 (0.000 + 0.000)</span>
<span id="t17" class="ui" style="left:1016px;top:92.5px;transform:scaleX(0.9362);">L = 21.000</span>
<span id="t18" class="ui" style="left:1080px;top:92.5px;transform:scaleX(0.9163);">F = 200.000</span>
<span id="t19" class="ui" style="left:1150.3px;top:92.5px;transform:scaleX(0.9030);">S = 0.000</span><div class="isep" style="left:714px"></div><div class="isep" style="left:873px"></div><div class="isep" style="left:1011px"></div><div class="isep" style="left:1075px"></div><div class="isep" style="left:1145px"></div>
<div id="plot"><svg width="1362" height="860" viewBox="0 0 1362 860">
<path d="M356.500 0V860" style="stroke:#00ff00"/>
<path d="M0 820.500H1362" style="stroke:#ff0000"/>
<path class="y" d="M718.3 56.4 L449.5 56.4 L442.6 125.3 L379.4 125.3 L379.4 160.3 L431.1 160.3 L547.5 363.6 L547.5 615.3 L494.5 615.3 L494.5 752.6 L546.5 752.6 A2.4 2.4 0 0 1 546.5 757.3 L499.1 757.3 L491.4 765 L491.4 790.1 L498.4 796.6 L541.7 796.6 L613.4 724.5 L613.4 697.4 A8.2 8.2 0 1 1 621.6 689.2 L683.7 689.2 L683.7 233.4 L621.6 233.4 A8.2 8.2 0 1 1 613.4 225.2 L613.4 133.5 A8.2 8.2 0 1 1 621.6 125.3 L718.3 125.3 Z M718.3 46.5 L718.3 56.4"/>
<path class="c" d="M395.5 132.4 L412.5 132.4 L412.5 149.5 L395.5 149.5 Z M404.3 141.4 L412.5 141.4 M475.4 91 A7.2 7.2 0 1 1 461 91 A7.2 7.2 0 1 1 475.4 91 Z M536.9 157.6 A11.7 11.7 0 1 1 513.5 157.6 A11.7 11.7 0 1 1 536.9 157.6 Z M525.2 157.6 L537 157.6 M576.5 157.6 A16.5 16.5 0 1 1 543.5 157.6 A16.5 16.5 0 1 1 576.5 157.6 Z M560 157.6 L565.3 141.6 M591.9 91 A7.3 7.3 0 1 1 577.3 91 A7.3 7.3 0 1 1 591.9 91 Z M584.6 91 L592 90.2 M696.9 74.5 A5.4 5.4 0 1 1 686.1 74.5 A5.4 5.4 0 1 1 696.9 74.5 Z M500.3 209.1 L580.7 209.1 A8 8 0 0 1 588.7 217.1 L588.7 271.3 A8 8 0 0 1 580.7 279.3 L530.9 279.3 A8 8 0 0 1 524 275.2 L493.3 221 A8 8 0 0 1 500.3 209.1 Z M567.3 307.9 A10.6 10.6 0 0 1 588.6 307.9 L588.6 356.9 A10.6 10.6 0 0 1 567.3 356.9 Z M567.3 396.4 A10.6 10.6 0 0 1 588.6 396.4 L588.6 445.4 A10.6 10.6 0 0 1 567.3 445.4 Z M567.3 484.9 A10.6 10.6 0 0 1 588.6 484.9 L588.6 533.9 A10.6 10.6 0 0 1 567.3 533.9 Z M567.3 573.4 A10.6 10.6 0 0 1 588.6 573.4 L588.6 622.4 A10.6 10.6 0 0 1 567.3 622.4 Z M567.3 661.9 A10.6 10.6 0 0 1 588.6 661.9 L588.6 710.9 A10.6 10.6 0 0 1 567.3 710.9 Z M646.8 390.3 A5.4 5.4 0 1 1 636 390.3 A5.4 5.4 0 1 1 646.8 390.3 Z M670.1 576.7 A5.4 5.4 0 1 1 659.3 576.7 A5.4 5.4 0 1 1 670.1 576.7 Z M510.3 634.4 L526.7 634.4 L526.7 664.5 L510.3 664.5 Z M518.3 634.4 L518.3 643.5 M510.3 703.5 L526.7 703.5 L526.7 733.5 L510.3 733.5 Z M518.3 703.5 L518.3 713 M579.4 396.3 L588.6 395.6 M579.4 576.5 L588.6 576.5 M576.8 661.9 L569 659.2 M578.2 485 L578.2 474.4"/>
<path class="y dim" d="M667 780.2 L935.8 780.2 L942.7 711.3 L1005.9 711.3 L1005.9 676.3 L954.2 676.3 L837.8 473 L837.8 221.3 L890.8 221.3 L890.8 84 L838.8 84 A2.4 2.4 0 0 1 838.8 79.3 L886.2 79.3 L893.9 71.6 L893.9 46.5 L886.9 40 L843.6 40 L771.9 112.1 L771.9 139.2 A8.2 8.2 0 1 1 763.7 147.4 L701.6 147.4 L701.6 603.2 L763.7 603.2 A8.2 8.2 0 1 1 771.9 611.4 L771.9 703.1 A8.2 8.2 0 1 1 763.7 711.3 L667 711.3 Z M895.6 79.3 L886 79.3"/>
<path class="c dim" d="M818 528.6 A10.6 10.6 0 0 1 796.7 528.6 L796.7 479.7 A10.6 10.6 0 0 1 818 479.7 Z M818 440.1 A10.6 10.6 0 0 1 796.7 440.1 L796.7 391.2 A10.6 10.6 0 0 1 818 391.2 Z M818 351.6 A10.6 10.6 0 0 1 796.7 351.6 L796.7 302.7 A10.6 10.6 0 0 1 818 302.7 Z M818 263.1 A10.6 10.6 0 0 1 796.7 263.1 L796.7 214.2 A10.6 10.6 0 0 1 818 214.2 Z M818 174.6 A10.6 10.6 0 0 1 796.7 174.6 L796.7 125.7 A10.6 10.6 0 0 1 818 125.7 Z M738.5 446.3 A5.4 5.4 0 1 1 749.3 446.3 A5.4 5.4 0 1 1 738.5 446.3 Z M715.2 259.9 A5.4 5.4 0 1 1 726 259.9 A5.4 5.4 0 1 1 715.2 259.9 Z M804.6 557.3 L854.4 557.3 A8 8 0 0 1 861.3 561.4 L892 615.6 A8 8 0 0 1 885 627.5 L804.6 627.5 A8 8 0 0 1 796.6 619.5 M858.5 102.5 L874.5 102.5 L874.5 133.5 L858.5 133.5 Z M858.5 172.5 L874.5 172.5 L874.5 202.5 L858.5 202.5 Z M805.5 440.4 L796.4 440.6 M806.6 301.4 L806.6 292.2 M805.5 259.5 L796.4 259.5 M808.6 174.3 L817.4 175.3 M866.4 181.4 L866.4 172.2 M866.4 112.4 L866.4 102.2 M806.6 477 L806.6 469"/>
<path class="w dim" d="M806.5 557 L806.6 469 L805.5 440.4 M796.4 440.7 L744.3 446 M743.6 446.5 L806.6 301.4 L805.5 259.5 M796.4 259.5 L720.6 259.5 M721 259 L808.6 174.3 M817.4 175.3 L866.4 181.4 M866.4 172.2 L866.4 112.4 M867.2 102.2 L895.6 79.5"/>
<path class="c" d="M989.8 704.2 L972.8 704.2 L972.8 687.1 L989.8 687.1 Z M909.9 745.6 A7.2 7.2 0 1 1 924.3 745.6 A7.2 7.2 0 1 1 909.9 745.6 Z M848.4 679 A11.7 11.7 0 1 1 871.8 679 A11.7 11.7 0 1 1 848.4 679 Z M808.8 679 A16.5 16.5 0 1 1 841.8 679 A16.5 16.5 0 1 1 808.8 679 Z M793.4 745.6 A7.3 7.3 0 1 1 808 745.6 A7.3 7.3 0 1 1 793.4 745.6 Z M688.4 762.1 A5.4 5.4 0 1 1 699.2 762.1 A5.4 5.4 0 1 1 688.4 762.1 Z M693.5 761.2 L698.9 761.2 M799.1 746.3 L802.7 738.4 M825.4 679.4 L841.8 679.4 M860.2 679.4 L869 687.3 M917 745.5 L923.1 740.8 M981.4 695.7 L973.2 695.7 M806.6 567 L806.6 557.1 L804.5 557.1 A8 8 0 0 0 796.5 565.1"/>
<path class="w" d="M356.5 820 L518.3 713 M519.5 703.5 L576.8 662.2 M569 659.2 L518.9 643.5 M518.9 634.4 L579.4 577 M588.6 576.5 L663.8 576.5 M663.8 575.9 L578.2 485 M578.2 474.4 L579.4 396.3 M588.6 395.6 L640.7 390.3 M640.7 389.5 L502.5 219 L404.3 141.4 M412.6 140.5 L468.2 91.2 L525.2 157.6 M537 157.6 L560 157.6 M565.3 141.6 L584.9 91 M592 90.2 L689.9 75.1 L718.3 47 M718.3 46.5 L693.5 761.2 M698.9 761.2 L799.1 746.3 M802.7 738.4 L824.8 679.6 M841.8 679.4 L860.2 679.4 M869 687.3 L916.5 744.9 M923.1 740.8 L981.4 695.7 M973.2 695.4 L806.7 567"/>
<path class="cur" d="M796.5 568 L796.5 618"/>
<rect fill="#00ffff" x="793" y="565" width="7" height="7"/>
<rect fill="#00ffff" x="793" y="614" width="7" height="7"/>
</svg></div>
<div id="plotw"></div><div id="strack"></div>
<svg id="sthumb" width="11" height="21" viewBox="0 0 11 21"><path d="M0 0h11v14l-5.500 5.500l-5.500-5.500z" fill="#0078d7"/></svg>
<div id="statusline"></div>
<span id="t20" class="ui" style="left:3px;top:1021.5px;transform:scaleX(1.0121);">Normal text file</span>
<span id="t21" class="ui" style="left:1164px;top:1021.5px;transform:scaleX(0.9477);">length : 5,387&nbsp;&nbsp;&nbsp;&nbsp;lines : 296</span>
<span id="t22" class="ui" style="left:1384px;top:1021.5px;transform:scaleX(0.9180);">Ln : 189&nbsp;&nbsp;&nbsp;&nbsp;Col : 12&nbsp;&nbsp;&nbsp;&nbsp;Pos : 3,408</span>
<span id="t23" class="ui" style="left:1644px;top:1021.5px;transform:scaleX(0.9568);">Windows (CR LF)</span>
<span id="t24" class="ui" style="left:1753.8px;top:1021.5px;transform:scaleX(0.9324);">UTF-8</span>
<span id="t25" class="ui" style="left:1874px;top:1021.5px;transform:scaleX(0.9493);">INS</span><div class="ssep" style="left:1159px"></div><div class="ssep" style="left:1378px"></div><div class="ssep" style="left:1639px"></div><div class="ssep" style="left:1748px"></div><div class="ssep" style="left:1869px"></div><div class="ssep" style="left:1900px"></div>
</body></html>
